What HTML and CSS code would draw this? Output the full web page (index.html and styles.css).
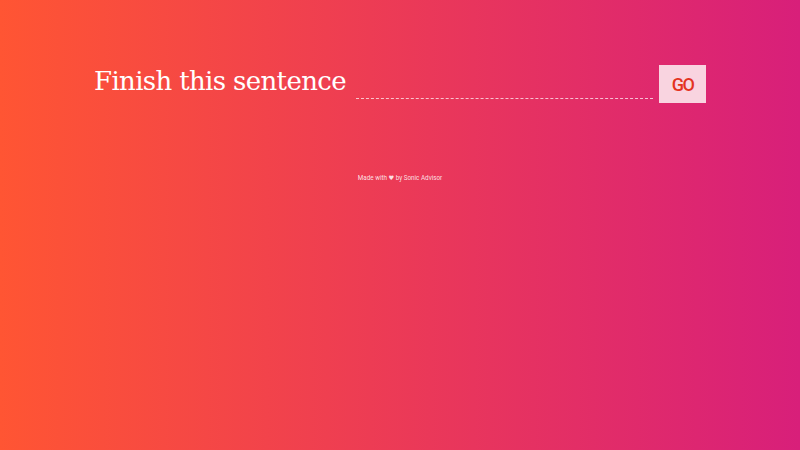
FILE: index.html
```html
<!DOCTYPE html>
<html lang="en">
<head>
  <meta charset="UTF-8">
  <meta name="viewport" content="width=device-width, initial-scale=1.0">
  <title>Finish this sentence</title>
  <link rel="stylesheet" href="styles.css">
</head>
<body>

  <form class="sentence-form" onsubmit="return false">
    <label class="sentence-label" for="sentence">Finish this sentence</label>
    <input type="text" id="sentence" class="sentence-input">
    <button type="submit" class="go-button">GO</button>
  </form>

  <p class="credit">Made with <span class="heart">♥</span> by Sonic Advisor</p>

</body>
</html>
```

FILE: styles.css
```css
html, body {
  height: 100%;
}

body {
  margin: 0;
  background: linear-gradient(to right, #ff5533, #d81f7a);
  color: white;
  font-family: "Roboto", sans-serif;
  display: flex;
  flex-direction: column;
  align-items: center;
}

.sentence-form {
  display: flex;
  align-items: flex-end;
  width: 612px;
  margin-top: 65px;
}

.sentence-label {
  font-family: "DejaVu Serif", serif;
  font-size: 26px;
  letter-spacing: -0.65px;
  line-height: 32px;
  margin-bottom: 6px;
  white-space: nowrap;
}

.sentence-input {
  flex: 1;
  min-width: 0;
  height: 30px;
  margin: 0 6px 4px 10px;
  padding: 0;
  background: transparent;
  border: none;
  border-bottom: 1px dashed rgba(255, 255, 255, 0.7);
  outline: none;
  color: white;
}

.go-button {
  width: 47px;
  height: 38px;
  padding: 0;
  border: none;
  background: #f9d4e0;
  color: #e4321f;
  font-family: "Roboto", sans-serif;
  font-size: 18px;
  font-weight: 500;
  letter-spacing: -1.5px;
}

.credit {
  margin: 70px 0 0;
  font-family: "Roboto", sans-serif;
  font-size: 6.3px;
  line-height: 10px;
  color: rgba(255, 255, 255, 0.85);
}

.heart {
  font-family: "DejaVu Sans", sans-serif;
}
```
